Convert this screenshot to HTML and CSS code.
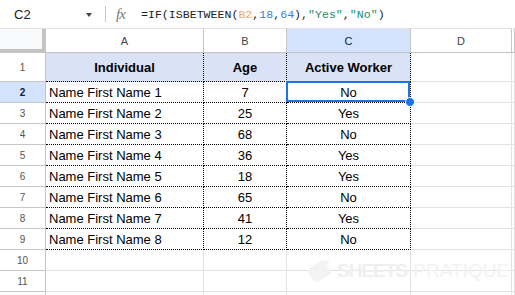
FILE: index.html
```html
<!DOCTYPE html>
<html lang="en">
<head>
  <meta charset="UTF-8">
  <title>ISBETWEEN - Sheets</title>
  <link rel="stylesheet" href="styles.css">
</head>
<body>

<div class="formula-bar">
  <div class="name-box">C2</div>
  <span class="caret"></span>
  <span class="divider"></span>
  <span class="fx">fx</span>
  <div class="formula">=IF(ISBETWEEN(<span class="ref">B2</span>,<span class="num">18</span>,<span class="num">64</span>),<span class="str">"Yes"</span>,<span class="str">"No"</span>)</div>
</div>

<div class="sheet">
  <div class="row col-heads">
    <div class="corner"></div>
    <div class="col-head">A</div>
    <div class="col-head">B</div>
    <div class="col-head active">C</div>
    <div class="col-head">D</div>
    <div class="col-head"></div>
  </div>

  <div class="row title-row">
    <div class="row-head">1</div>
    <div class="cell data th"><span>Individual</span></div>
    <div class="cell data th"><span>Age</span></div>
    <div class="cell data th"><span>Active Worker</span></div>
    <div class="cell"></div>
    <div class="cell"></div>
  </div>

  <div class="row">
    <div class="row-head active">2</div>
    <div class="cell data">Name First Name 1</div>
    <div class="cell data center">7</div>
    <div class="cell data center selected">No<span class="handle"></span></div>
    <div class="cell"></div>
    <div class="cell"></div>
  </div>

  <div class="row">
    <div class="row-head">3</div>
    <div class="cell data">Name First Name 2</div>
    <div class="cell data center">25</div>
    <div class="cell data center">Yes</div>
    <div class="cell"></div>
    <div class="cell"></div>
  </div>

  <div class="row">
    <div class="row-head">4</div>
    <div class="cell data">Name First Name 3</div>
    <div class="cell data center">68</div>
    <div class="cell data center">No</div>
    <div class="cell"></div>
    <div class="cell"></div>
  </div>

  <div class="row">
    <div class="row-head">5</div>
    <div class="cell data">Name First Name 4</div>
    <div class="cell data center">36</div>
    <div class="cell data center">Yes</div>
    <div class="cell"></div>
    <div class="cell"></div>
  </div>

  <div class="row">
    <div class="row-head">6</div>
    <div class="cell data">Name First Name 5</div>
    <div class="cell data center">18</div>
    <div class="cell data center">Yes</div>
    <div class="cell"></div>
    <div class="cell"></div>
  </div>

  <div class="row">
    <div class="row-head">7</div>
    <div class="cell data">Name First Name 6</div>
    <div class="cell data center">65</div>
    <div class="cell data center">No</div>
    <div class="cell"></div>
    <div class="cell"></div>
  </div>

  <div class="row">
    <div class="row-head">8</div>
    <div class="cell data">Name First Name 7</div>
    <div class="cell data center">41</div>
    <div class="cell data center">Yes</div>
    <div class="cell"></div>
    <div class="cell"></div>
  </div>

  <div class="row">
    <div class="row-head">9</div>
    <div class="cell data">Name First Name 8</div>
    <div class="cell data center">12</div>
    <div class="cell data center">No</div>
    <div class="cell"></div>
    <div class="cell"></div>
  </div>

  <div class="row">
    <div class="row-head">10</div>
    <div class="cell"></div>
    <div class="cell"></div>
    <div class="cell"></div>
    <div class="cell"></div>
    <div class="cell"></div>
  </div>

  <div class="row">
    <div class="row-head">11</div>
    <div class="cell"></div>
    <div class="cell"></div>
    <div class="cell"></div>
    <div class="cell"></div>
    <div class="cell"></div>
  </div>

  <div class="row tail">
    <div class="row-head"></div>
    <div class="cell"></div>
    <div class="cell"></div>
    <div class="cell"></div>
    <div class="cell"></div>
    <div class="cell"></div>
  </div>

  <!-- site watermark -->
  <div class="watermark">
    <svg class="wm-logo" width="30" height="28" viewBox="0 0 30 28">
      <g transform="rotate(-30 15 14)" fill="#f3f3f3">
        <rect x="6" y="6" width="18" height="16" rx="2"/>
        <rect x="4" y="9" width="3" height="10" rx="1"/>
      </g>
      <circle cx="22" cy="5" r="2" fill="#f3f3f3"/>
    </svg>
    <span class="wm-bold">SHEETS</span><span class="wm-light">-PRATIQUE</span>
  </div>
</div>

</body>
</html>
```

FILE: styles.css
```css
/* General Styles */
* {
  box-sizing: border-box;
}

body {
  margin: 0;
  background: #fff;
  font-family: 'Liberation Sans', Arial, sans-serif;
  color: #000;
  width: 515px;
  height: 295px;
  overflow: hidden;
}

/* Formula bar */
.formula-bar {
  display: flex;
  align-items: center;
  height: 29px;
  border-bottom: 1px solid #e1e1e1;
}

.name-box {
  width: 86px;
  padding-left: 14px;
  font-size: 13px;
  color: #222;
}

.caret {
  width: 0;
  height: 0;
  border-left: 3.5px solid transparent;
  border-right: 3.5px solid transparent;
  border-top: 4px solid #444;
  margin-top: 1px;
}

.divider {
  width: 1px;
  height: 16px;
  background: #c7c7c7;
  margin-left: 13px;
}

.fx {
  width: 16px;
  margin-left: 10px;
  font-family: 'Liberation Serif', serif;
  font-style: italic;
  font-size: 15px;
  color: #777;
  letter-spacing: -1px;
}

.formula {
  margin-left: 9px;
  font-family: 'Liberation Mono', monospace;
  font-size: 11.6px;
  color: #222;
}

.formula .ref {
  color: #f0a868;
}

.formula .num {
  color: #3d7be0;
}

.formula .str {
  color: #1e8c6e;
}

/* Grid */
.sheet {
  position: relative;
}

.row {
  display: grid;
  grid-template-columns: 46px 158px 83px 124px 101px 1fr;
  height: 21px;
}

.row > div {
  border-right: 1px solid #e2e2e2;
  border-bottom: 1px solid #e2e2e2;
  display: flex;
  align-items: center;
  font-size: 13px;
  white-space: nowrap;
}

.col-heads {
  height: 24px;
}

.title-row {
  height: 29px;
}

.row.tail {
  height: 3px;
}

.row.tail > div {
  border-bottom: none;
}

.row > .corner {
  background: #f8f9fa;
  border-right: 4px solid #c4c4c4;
  border-bottom: 4px solid #c4c4c4;
}

.row > .col-head {
  justify-content: center;
  font-size: 11px;
  color: #444;
  border-right-color: #c7c7c7;
  border-bottom-color: #c4c4c4;
}

.row > .row-head {
  justify-content: center;
  font-size: 10px;
  color: #555;
  border-right-color: #c4c4c4;
  border-bottom-color: #c7c7c7;
}

.row > .active {
  background: #d3e3fd;
  color: #0b1f45;
}

.row > .row-head.active {
  font-weight: bold;
}

.row > .data {
  padding-left: 3px;
  border-right: 1px dotted #000;
  border-bottom: 1px dotted #000;
}

.row > .th {
  justify-content: center;
  padding-left: 0;
  background: #dae2f7;
  font-weight: bold;
}

.row > .center {
  justify-content: center;
  padding-left: 0;
}

/* Selected cell */
.selected {
  position: relative;
}

.selected::before {
  content: "";
  position: absolute;
  top: -1px;
  left: -1px;
  right: 0;
  bottom: 0;
  border: 2px solid #1a73e8;
}

.handle {
  position: absolute;
  right: -5px;
  bottom: -5px;
  width: 10px;
  height: 10px;
  border-radius: 50%;
  background: #1a73e8;
  border: 1px solid #fff;
}

/* Watermark */
.watermark {
  position: absolute;
  left: 305px;
  top: 228px;
  display: flex;
  align-items: center;
  font-size: 19px;
}

.wm-logo {
  margin-right: 2px;
}

.wm-bold {
  font-weight: bold;
  letter-spacing: -1px;
  color: #efefef;
}

.wm-light {
  color: #f2f2f2;
}
```
